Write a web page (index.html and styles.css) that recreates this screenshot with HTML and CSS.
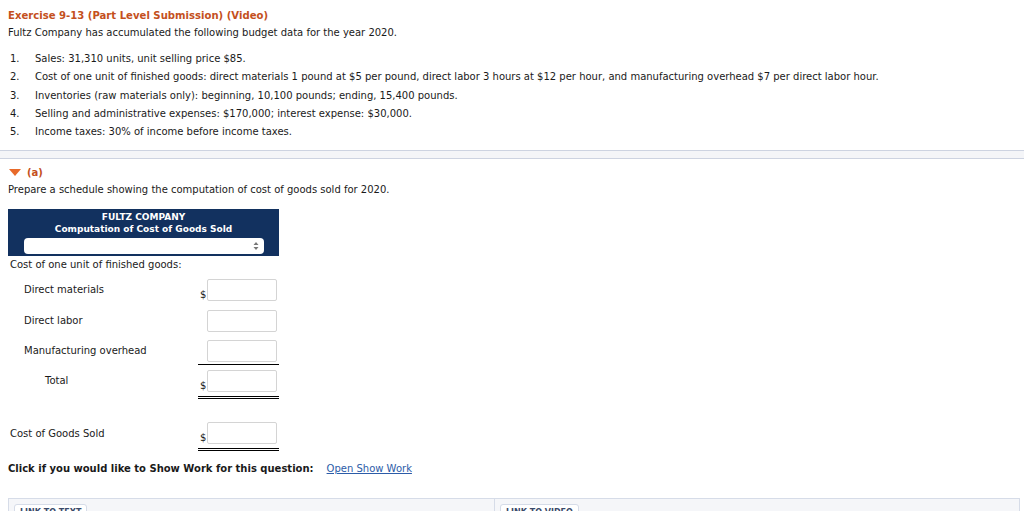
FILE: index.html
```html
<!DOCTYPE html>
<html lang="en">
<head>
    <meta charset="UTF-8">
    <title>Exercise 9-13</title>
    <link rel="stylesheet" href="styles.css">
</head>
<body>
    <div class="page">
        <h1 class="title">Exercise 9-13 (Part Level Submission) (Video)</h1>
        <p class="intro">Fultz Company has accumulated the following budget data for the year 2020.</p>

        <ol class="data-list">
            <li><span class="num">1.</span>Sales: 31,310 units, unit selling price $85.</li>
            <li><span class="num">2.</span>Cost of one unit of finished goods: direct materials 1 pound at $5 per pound, direct labor 3 hours at $12 per hour, and manufacturing overhead $7 per direct labor hour.</li>
            <li><span class="num">3.</span>Inventories (raw materials only): beginning, 10,100 pounds; ending, 15,400 pounds.</li>
            <li><span class="num">4.</span>Selling and administrative expenses: $170,000; interest expense: $30,000.</li>
            <li><span class="num">5.</span>Income taxes: 30% of income before income taxes.</li>
        </ol>
    </div>

    <div class="band"></div>

    <div class="page">
        <div class="part-head"><span class="caret"></span>(a)</div>
        <p class="prompt">Prepare a schedule showing the computation of cost of goods sold for 2020.</p>

        <div class="sched-head">
            <div class="company">FULTZ COMPANY</div>
            <div class="company">Computation of Cost of Goods Sold</div>
            <div class="select">
                <svg width="6" height="10" viewBox="0 0 6 10"><path d="M3 1 L5.5 4 H0.5 Z M3 9 L0.5 6 H5.5 Z" fill="#777"/></svg>
            </div>
        </div>

        <div class="sched-sub">Cost of one unit of finished goods:</div>

        <div class="row r1">
            <div class="label ind1">Direct materials</div>
            <div class="amt"><span class="dollar">$</span><span class="box"></span></div>
        </div>
        <div class="row r2">
            <div class="label ind1">Direct labor</div>
            <div class="amt"><span class="dollar"></span><span class="box"></span></div>
        </div>
        <div class="row r3">
            <div class="label ind1">Manufacturing overhead</div>
            <div class="amt single"><span class="dollar"></span><span class="box"></span></div>
        </div>
        <div class="row r4">
            <div class="label ind2">Total</div>
            <div class="amt double"><span class="dollar">$</span><span class="box"></span></div>
        </div>
        <div class="row r5">
            <div class="label cogs">Cost of Goods Sold</div>
            <div class="amt double"><span class="dollar">$</span><span class="box"></span></div>
        </div>

        <p class="show-work"><strong>Click if you would like to Show Work for this question:</strong><a href="#">Open Show Work</a></p>

        <div class="links">
            <div class="link-cell left"><span class="link-btn">LINK TO TEXT</span></div>
            <div class="link-cell"><span class="link-btn">LINK TO VIDEO</span></div>
        </div>
    </div>
</body>
</html>
```

FILE: styles.css
```css
body {
    margin: 0;
    font-family: "DejaVu Sans", Verdana, sans-serif;
    font-size: 10px;
    color: #1a1a1a;
    background-color: #fff;
}
.page {
    padding: 0 8px;
}
.title {
    margin: 0;
    padding-top: 7px;
    font-size: 10.1px;
    line-height: 17px;
    color: #c4501d;
}
.intro {
    margin: 0;
    line-height: 17px;
}
.data-list {
    list-style: none;
    margin: 9px 0 0;
    padding: 0;
}
.data-list li {
    line-height: 18.25px;
    white-space: nowrap;
}
.num {
    display: inline-block;
    width: 25px;
    padding-left: 2px;
}
.band {
    margin-top: 9px;
    height: 7px;
    background-color: #f4f5f8;
    border-top: 1px solid #cdd3e1;
    border-bottom: 1px solid #cdd3e1;
}
.part-head {
    margin-top: 5px;
    line-height: 17px;
    font-weight: bold;
    color: #c4501d;
    display: flex;
    align-items: center;
}
.caret {
    width: 0;
    height: 0;
    border-left: 6px solid transparent;
    border-right: 6px solid transparent;
    border-top: 7px solid #e86a2a;
    margin: 0 6px 0 1px;
}
.prompt {
    margin: 0;
    line-height: 17px;
}
.sched-head {
    margin-top: 11px;
    width: 271px;
    padding: 2px 0 2px;
    background-color: #12315f;
    color: #fff;
    text-align: center;
    font-weight: bold;
    font-size: 9px;
}
.company {
    line-height: 12px;
}
.select {
    margin: 3px 15px 0 16px;
    height: 16px;
    background-color: #fff;
    border-radius: 4px;
    display: flex;
    align-items: center;
    justify-content: flex-end;
    padding-right: 5px;
}
.sched-sub {
    line-height: 17px;
    padding-left: 2px;
}
.row {
    display: flex;
    align-items: flex-start;
}
.label {
    width: 188px;
    padding-left: 2px;
    line-height: 21px;
}
.cogs {
    line-height: 23px;
}
.ind1 {
    width: 174px;
    padding-left: 16px;
}
.ind2 {
    width: 153px;
    padding-left: 37px;
}
.amt {
    width: 81px;
    display: flex;
    align-items: flex-end;
}
.dollar {
    width: 9px;
    font-size: 10px;
    line-height: 12px;
    padding-left: 2px;
    box-sizing: border-box;
}
.box {
    width: 70px;
    height: 22px;
    box-sizing: border-box;
    border: 1px solid #d4d4d4;
    border-radius: 2px;
    background-color: #fff;
}
.single {
    padding-bottom: 2px;
    border-bottom: 1px solid #000;
}
.double {
    padding-bottom: 4px;
    border-bottom: 3px double #000;
}
.r1 { margin-top: 6px; }
.r2 { margin-top: 9px; }
.r3 { margin-top: 8px; }
.r4 { margin-top: 5px; }
.r5 { margin-top: 23px; }
.show-work {
    margin: 9px 0 0;
    line-height: 17px;
}
.show-work a {
    margin-left: 13px;
    color: #2c5ca8;
}
.links {
    margin-top: 21px;
    margin-right: -4px;
    height: 40px;
    display: flex;
    background-color: #f5f6f9;
    border: 1px solid #d6dce8;
}
.link-cell {
    flex: 1;
    padding: 5px 5px;
}
.link-cell.left {
    flex: 0 0 475px;
    border-right: 1px solid #d6dce8;
}
.link-btn {
    display: inline-block;
    padding: 3px 5px;
    background-color: #fff;
    border: 1px solid #d6dce8;
    border-radius: 3px;
    font-size: 8px;
    font-weight: bold;
    color: #3a4a6a;
}
```
